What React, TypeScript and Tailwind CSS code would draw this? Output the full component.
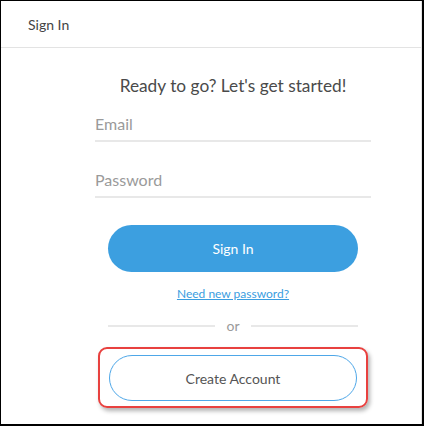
import React from 'react';

const Field: React.FC<{ label: string; className?: string }> = ({ label, className = '' }) => (
  <div className={`flex items-end border-b-2 border-[#e8e8e8] pb-[6px] ${className}`}>
    <span className="text-[16px] leading-[20px] text-[#9a9a9a]">{label}</span>
  </div>
);

export default function App() {
  return (
    <div className="w-[424px] h-[426px] border-t border-l border-r-2 border-b-2 border-black bg-white overflow-hidden font-['Lato','Open_Sans',sans-serif]">
      <div className="h-full border-r border-[#e3e3e3]">
        {/* Header */}
        <div className="h-[47px] flex items-center pl-[27px] border-b border-[#e3e3e3]">
          <span className="text-[14px] text-[#444]">Sign In</span>
        </div>

        {/* Form column */}
        <div className="ml-[94px] w-[276px] flex flex-col">
          <h1 className="mt-[27px] h-[22px] leading-[22px] text-center text-[17.3px] text-[#4a4a4a]">
            Ready to go? Let's get started!
          </h1>
          <Field label="Email" className="h-[45px]" />
          <Field label="Password" className="h-[56px]" />

          <button className="mt-[27px] mx-auto w-[250px] h-[47px] rounded-full bg-[#3c9fe0] text-white text-[14px]">
            Sign In
          </button>

          <a href="#" className="mt-[14px] self-center text-[12px] leading-[16px] text-[#3a9de0] underline">
            Need new password?
          </a>

          <div className="mt-[16px] mx-auto w-[250px] flex items-center gap-[11px]">
            <div className="flex-1 h-[2px] bg-[#e8e8e8]" />
            <span className="text-[14px] leading-[16px] text-[#9a9a9a]">or</span>
            <div className="flex-1 h-[2px] bg-[#e8e8e8]" />
          </div>

          <div className="mt-[13px] ml-[3px] w-[270px] px-[9px] pt-[6px] pb-[5px] border-2 border-[#e8413f] rounded-[9px] shadow-[2px_3px_4px_rgba(0,0,0,0.3)]">
            <button className="w-full h-[46px] rounded-full border border-[#4ea7e8] bg-white text-[14px] text-[#555]">
              Create Account
            </button>
          </div>
        </div>
      </div>
    </div>
  );
}
